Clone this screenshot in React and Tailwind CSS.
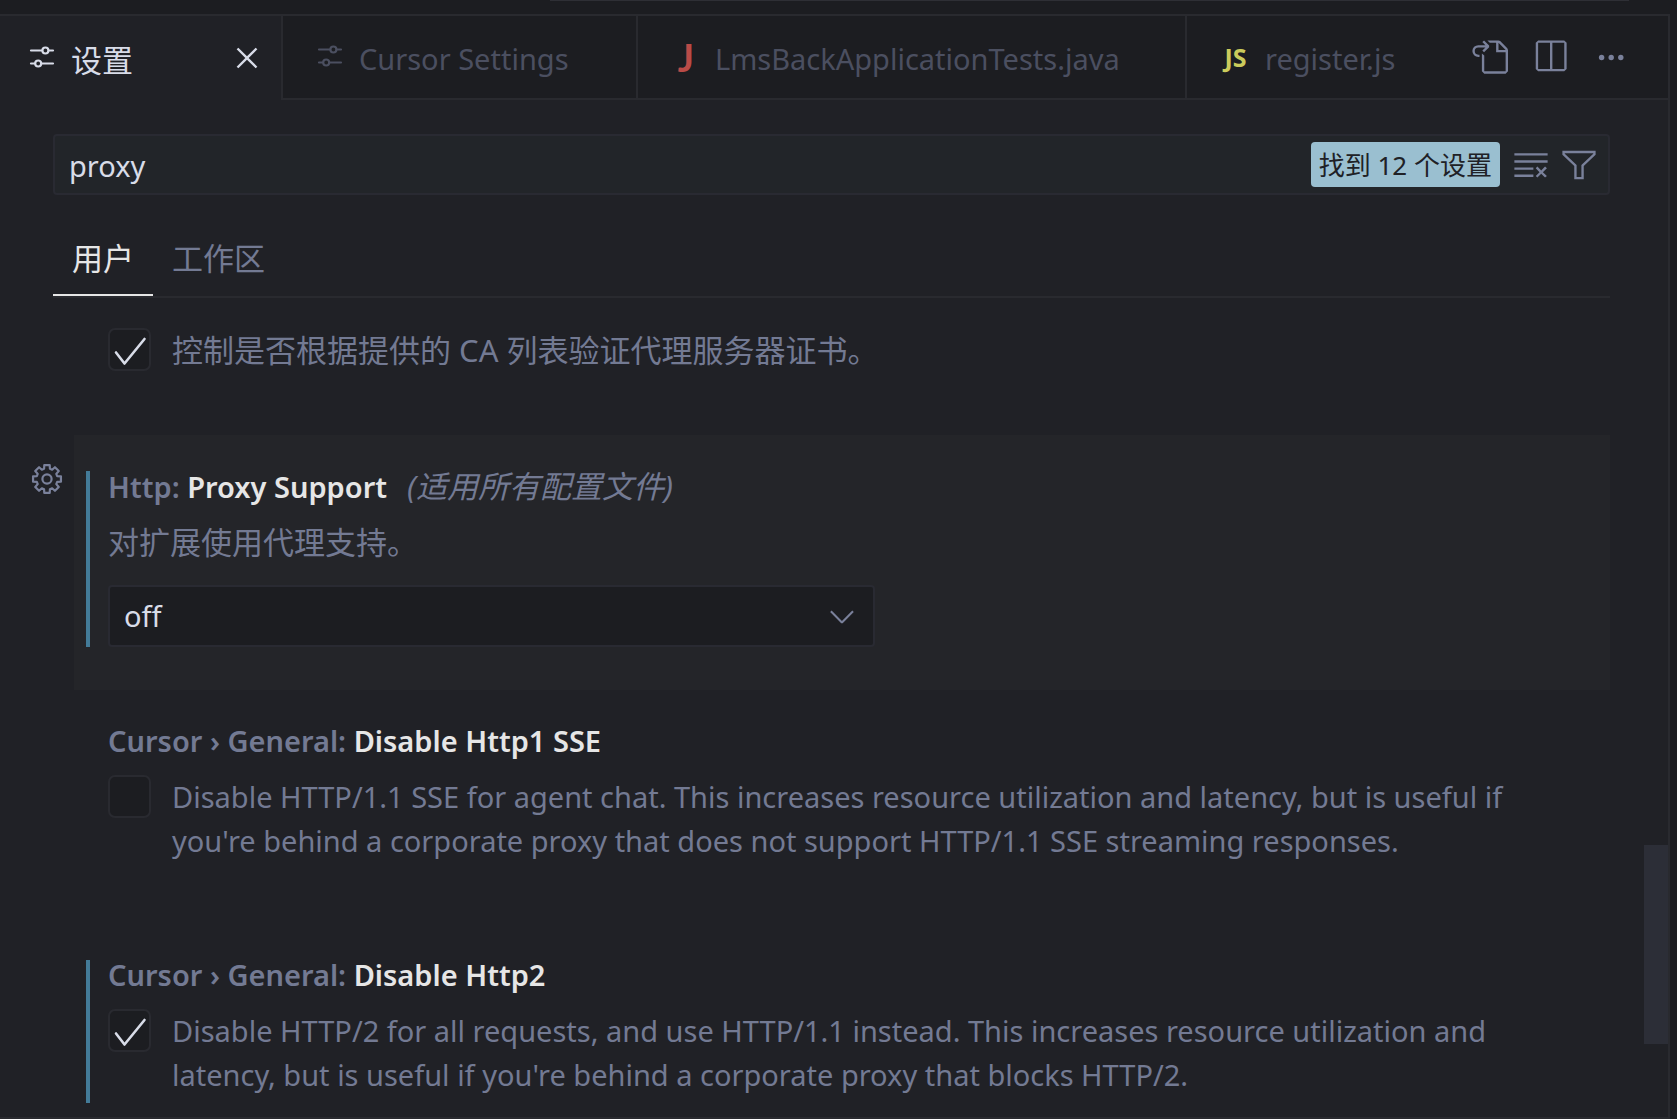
import { useState } from "react"
import {
    VscChevronDown,
    VscClearAll,
    VscClose,
    VscFilter,
    VscGoToFile,
    VscSplitHorizontal,
} from "react-icons/vsc"

// outline of an eight-toothed wheel: two tip points and two valley points per tooth
const gearPoints = [0, 45, 90, 135, 180, 225, 270, 315]
    .flatMap(a => [[a - 16, 10.6], [a - 11, 14.2], [a + 11, 14.2], [a + 16, 10.6]])
    .map(([a, r]) => {
        const rad = (a * Math.PI) / 180
        return `${(16 + r * Math.sin(rad)).toFixed(2)},${(16 - r * Math.cos(rad)).toFixed(2)}`
    })
    .join(" ")

function GearIcon() {
    return (
        <svg viewBox="0 0 32 32" fill="none" stroke="currentColor" strokeWidth="2.2" strokeLinejoin="round" className="h-8 w-8">
            <polygon points={gearPoints} />
            <circle cx="16" cy="16" r="4.6" />
        </svg>
    )
}

function SlidersIcon() {
    return (
        <svg viewBox="0 0 26 26" fill="none" stroke="currentColor" strokeWidth="2.2" strokeLinecap="round" className="h-[26px] w-[26px] shrink-0">
            <path d="M2 5.5h11M20 5.5h4M2 18.5h4M13 18.5h11" />
            <circle cx="16.4" cy="5.5" r="3" />
            <circle cx="9.2" cy="18.5" r="3" />
        </svg>
    )
}

function CheckIcon() {
    return (
        <svg viewBox="0 0 38 38" fill="none" stroke="currentColor" strokeWidth="2.6" strokeLinecap="round" strokeLinejoin="round" className="pointer-events-none col-start-1 row-start-1 h-[38px] w-[38px] place-self-center text-[#d8dce8]">
            <path d="M5 21.5l8.5 11L33.500 8" />
        </svg>
    )
}

function EllipsisIcon() {
    return (
        <svg viewBox="0 0 38 38" fill="currentColor" className="h-[38px] w-[38px]">
            <circle cx="9.600" cy="19.500" r="2.700" />
            <circle cx="19.200" cy="19.500" r="2.700" />
            <circle cx="28.800" cy="19.500" r="2.700" />
        </svg>
    )
}

function FileTab({ icon, label, width }) {
    return (
        <button role="tab" className={`${width} flex shrink-0 items-center border-b-2 border-[#292a2f] bg-[#1c1d21] text-[29px] text-[#4b4f60]`}>
            {icon}
            <span className="pt-1 whitespace-nowrap">{label}</span>
        </button>
    )
}

function CheckSetting({ id, checked, onChange, children }) {
    return (
        <div className="flex items-start gap-[21px] pr-12 pb-1.5">
            <span className="grid h-[43px] w-[43px] shrink-0">
                <input
                    id={id}
                    type="checkbox"
                    checked={checked}
                    onChange={e => onChange(e.target.checked)}
                    className="col-start-1 row-start-1 h-full w-full appearance-none rounded-[7px] border-2 border-[#292a30] bg-[#1c1d21]"
                />
                {checked && <CheckIcon />}
            </span>
            <label htmlFor={id} className="text-[#737a93]">{children}</label>
        </div>
    )
}

function Setting({ category, title, scope, modified, focused, padding, children }) {
    return (
        <article className="flex">
            <div className="flex w-[74px] shrink-0 justify-end pt-[28px] pr-[11px]">
                {focused && (
                    <button aria-label="更多操作" className="h-8 text-[#7a819b]">
                        <GearIcon />
                    </button>
                )}
            </div>
            <div className={`${focused ? "bg-[#242529]" : ""} ${padding} flex min-w-0 flex-1 pl-3`}>
                <div className={`${modified ? "bg-[#437b98]" : ""} mt-[36px] w-1 shrink-0`} />
                <div className="min-w-0 flex-1 pt-[29px] pl-[18px]">
                    <h3 className="mb-3 h-11 font-semibold">
                        <span className="text-[#737a93]">{category}: </span>
                        <span className="text-[#e6e6e6]">{title}</span>
                        {scope && <em className="ml-5 text-[31px] font-normal text-[#737a93]">{scope}</em>}
                    </h3>
                    {children}
                </div>
            </div>
        </article>
    )
}

export default function App() {
    const [query, setQuery] = useState("proxy")
    const [support, setSupport] = useState("off")
    const [strictSSL, setStrictSSL] = useState(true)
    const [disableSSE, setDisableSSE] = useState(false)
    const [disableHttp2, setDisableHttp2] = useState(true)

    return (
        <div className="flex h-screen flex-col overflow-hidden bg-[#1c1d21] font-['Noto_Sans','Noto_Sans_CJK_SC',sans-serif] text-[29px] leading-[44px]">
            <div className="h-[14px] shrink-0 pr-[48px] pl-[550px]">
                <div className="h-px bg-[#2e2f35]" />
            </div>

            <div className="mr-[7px] flex min-h-0 flex-1 flex-col border-t-2 border-r-2 border-b-2 border-[#292a2f] bg-[#202126]">
                <header className="flex h-[84px] shrink-0">
                    <div role="tablist" className="flex min-w-0 flex-1 divide-x-2 divide-[#292a2f]">
                        <div className="flex w-[283px] shrink-0 items-center pl-[29px] text-[#d8dce8]">
                            <SlidersIcon />
                            <button role="tab" aria-selected="true" className="ml-4 pt-1 text-[31px]">设置</button>
                            <button aria-label="关闭" className="mr-[15px] ml-auto">
                                <VscClose className="h-[38px] w-[38px]" />
                            </button>
                        </div>
                        <FileTab width="w-[355px] pl-[34px] gap-[16px]" icon={<SlidersIcon />} label="Cursor Settings" />
                        <FileTab
                            width="w-[549px] pl-[36px] gap-[21px]"
                            icon={<span className="w-5 text-right font-['Lato',sans-serif] text-[38px] font-bold text-[#b94b47]">J</span>}
                            label="LmsBackApplicationTests.java"
                        />
                        <FileTab
                            width="flex-1 pl-[35px] gap-4"
                            icon={<span className="w-[27px] font-['Open_Sans',sans-serif] text-[25px] font-bold text-[#cbcb5c]">JS</span>}
                            label="register.js"
                        />
                    </div>
                    <div className="flex items-center gap-[23px] border-b-2 border-[#292a2f] bg-[#1c1d21] pr-[38px] text-[#7a819b]">
                        <button aria-label="打开设置 (JSON)"><VscGoToFile className="h-[38px] w-[38px]" /></button>
                        <button aria-label="拆分编辑器"><VscSplitHorizontal className="h-[38px] w-[38px]" /></button>
                        <button aria-label="更多"><EllipsisIcon /></button>
                    </div>
                </header>

                <div className="mt-[34px] mr-[58px] ml-[53px] flex h-[61px] shrink-0 items-center rounded-[4px] border-2 border-[#292a32] bg-[#222529] pr-[10px]">
                    <input
                        aria-label="搜索设置"
                        value={query}
                        onChange={e => setQuery(e.target.value)}
                        className="h-full min-w-0 flex-1 bg-transparent pt-px pl-[14px] text-[#d8dce8] outline-none"
                    />
                    <span className="flex h-[45px] shrink-0 items-center rounded-[4px] bg-[#9abfd0] px-2 text-[26px] text-[#202126]">找到 12 个设置</span>
                    <button aria-label="清除搜索" className="ml-3 text-[#7a819b]"><VscClearAll className="h-[38px] w-[38px]" /></button>
                    <button aria-label="筛选" className="ml-[10px] text-[#7a819b]"><VscFilter className="h-[38px] w-[38px]" /></button>
                </div>

                <div role="tablist" className="mr-[58px] ml-[53px] flex h-[103px] shrink-0 items-end border-b-2 border-[#292a2f] text-[31px]">
                    <button role="tab" aria-selected="true" className="border-b-2 border-[#e6e6e6] px-[19px] pb-[14px] text-[#e6e6e6]">用户</button>
                    <button role="tab" className="border-b-2 border-transparent px-[19px] pb-[14px] text-[#737a93]">工作区</button>
                </div>

                <div className="flex min-h-0 flex-1">
                    <main className="mr-[34px] min-w-0 flex-1 overflow-hidden">
                        <div className="pt-[30px] pb-[57px] pl-[108px] text-[31px]">
                            <CheckSetting id="strict-ssl" checked={strictSSL} onChange={setStrictSSL}>
                                控制是否根据提供的 CA 列表验证代理服务器证书。
                            </CheckSetting>
                        </div>

                        <Setting category="Http" title="Proxy Support" scope="(适用所有配置文件)" modified focused padding="pb-[43px]">
                            <label htmlFor="proxy-support" className="block text-[31px] text-[#737a93]">对扩展使用代理支持。</label>
                            <div className="mt-[21px] grid w-1/2 max-w-full min-w-[767px]">
                                <select
                                    id="proxy-support"
                                    value={support}
                                    onChange={e => setSupport(e.target.value)}
                                    className="col-start-1 row-start-1 h-[62px] appearance-none rounded-[4px] border-2 border-[#292a32] bg-[#1c1d21] px-[14px] text-[#d8dce8]"
                                >
                                    <option>off</option>
                                    <option>on</option>
                                    <option>fallback</option>
                                    <option>override</option>
                                </select>
                                <VscChevronDown className="pointer-events-none col-start-1 row-start-1 mr-[14px] h-[38px] w-[38px] self-center justify-self-end text-[#7a819b]" />
                            </div>
                        </Setting>

                        <Setting category="Cursor › General" title="Disable Http1 SSE" padding="pb-[55px]">
                            <CheckSetting id="disable-sse" checked={disableSSE} onChange={setDisableSSE}>
                                Disable HTTP/1.1 SSE for agent chat. This increases resource utilization and latency, but is useful if you're behind a corporate proxy that does not support HTTP/1.1 SSE streaming responses.
                            </CheckSetting>
                        </Setting>

                        <Setting category="Cursor › General" title="Disable Http2" modified padding="pb-[13px]">
                            <CheckSetting id="disable-http2" checked={disableHttp2} onChange={setDisableHttp2}>
                                Disable HTTP/2 for all requests, and use HTTP/1.1 instead. This increases resource utilization and latency, but is useful if you're behind a corporate proxy that blocks HTTP/2.
                            </CheckSetting>
                        </Setting>
                    </main>
                    <div className="flex w-6 shrink-0 flex-col pt-[547px]">
                        <div className="h-[199px] bg-[#2c2e37]" />
                    </div>
                </div>
            </div>
        </div>
    )
}
